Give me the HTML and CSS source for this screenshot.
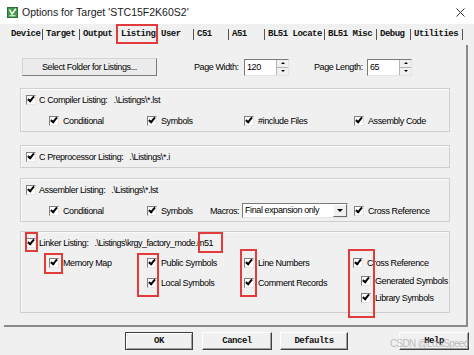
FILE: index.html
```html
<!DOCTYPE html>
<html lang="en">
<head>
    <meta charset="UTF-8">
    <meta name="viewport" content="width=device-width, initial-scale=1.0">
    <title>Options for Target</title>
    <link rel="stylesheet" href="styles.css">
</head>
<body>
<div class="window">
    <div class="titlebar">
        <svg class="app-icon" width="11" height="11" viewBox="0 0 11 11">
            <rect x="0.5" y="0.5" width="10" height="10" fill="#3f9d48" stroke="#2b6f32"/>
            <path d="M2.5 2.5 L5 7 L8.8 1.8" fill="none" stroke="#fff" stroke-width="1.5"/>
            <path d="M2.5 8.8 H8.5" stroke="#fff" stroke-width="1"/>
        </svg>
        <span class="title">Options for Target 'STC15F2K60S2'</span>
        <svg class="close" width="9" height="9" viewBox="0 0 9 9">
            <path d="M0.5 0.5 L8.5 8.5 M8.5 0.5 L0.5 8.5" stroke="#333" stroke-width="1"/>
        </svg>
    </div>

    <div class="tabs">
        <span class="tab">Device</span>
        <span class="tab">Target</span>
        <span class="tab plain">Output</span>
        <span class="tab plain active">Listing</span>
        <span class="tab">User</span>
        <span class="tab">C51</span>
        <span class="tab">A51</span>
        <span class="tab">BL51 Locate</span>
        <span class="tab">BL51 Misc</span>
        <span class="tab">Debug</span>
        <span class="tab">Utilities</span>
    </div>

    <div class="panel">
        <div class="toprow">
            <button class="folder">Select Folder for Listings...</button>
            <span class="lbl width-lbl">Page Width:</span>
            <span class="spin"><span class="val">120</span><span class="arrows"><i class="up"></i><i class="dn"></i></span></span>
            <span class="lbl length-lbl">Page Length:</span>
            <span class="spin"><span class="val">65</span><span class="arrows"><i class="up"></i><i class="dn"></i></span></span>
        </div>

        <div class="group g1">
            <div class="row head"><span class="cb"></span><span>C Compiler Listing:</span><span class="path">.\Listings\*.lst</span></div>
            <div class="items">
                <span class="item"><span class="cb"></span>Conditional</span>
                <span class="item"><span class="cb"></span>Symbols</span>
                <span class="item"><span class="cb"></span>#include Files</span>
                <span class="item"><span class="cb"></span>Assembly Code</span>
            </div>
        </div>

        <div class="group g2">
            <div class="row head"><span class="cb"></span><span>C Preprocessor Listing:</span><span class="path">.\Listings\*.i</span></div>
        </div>

        <div class="group g3">
            <div class="row head"><span class="cb"></span><span>Assembler Listing:</span><span class="path">.\Listings\*.lst</span></div>
            <div class="items asm">
                <span class="item"><span class="cb"></span>Conditional</span>
                <span class="item"><span class="cb"></span>Symbols</span>
                <span class="item">Macros:</span>
                <span class="select"><span class="val">Final expansion only</span><span class="drop"></span></span>
                <span class="item xref"><span class="cb"></span>Cross Reference</span>
            </div>
        </div>

        <div class="group g4">
            <div class="row head"><span class="cb"></span><span>Linker Listing:</span><span class="path lk-path">.\Listings\krgy_factory_mode.m51</span></div>
            <div class="cols">
                <div class="col">
                    <div class="line"><span class="cb"></span>Memory Map</div>
                </div>
                <div class="col">
                    <div class="line"><span class="cb"></span>Public Symbols</div>
                    <div class="line"><span class="cb"></span>Local Symbols</div>
                </div>
                <div class="col">
                    <div class="line"><span class="cb"></span>Line Numbers</div>
                    <div class="line"><span class="cb"></span>Comment Records</div>
                </div>
                <div class="col col4">
                    <div class="line"><span class="cb"></span>Cross Reference</div>
                    <div class="line sub"><span class="cb"></span>Generated Symbols</div>
                    <div class="line sub"><span class="cb"></span>Library Symbols</div>
                </div>
            </div>
        </div>
    </div>

    <div class="buttons">
        <button class="dlg ok">OK</button>
        <button class="dlg cancel">Cancel</button>
        <button class="dlg defaults">Defaults</button>
        <button class="dlg help">Help</button>
    </div>

    <!-- red annotation boxes -->
    <div class="mark m-tab"></div>
    <div class="mark m-linker"></div>
    <div class="mark m-m51"></div>
    <div class="mark m-mem"></div>
    <div class="mark m-pub"></div>
    <div class="mark m-line"></div>
    <div class="mark m-xref"></div>

    <div class="watermark">CSDN @LostSpeed</div>
</div>
</body>
</html>
```

FILE: styles.css
```css
body {
    margin: 0;
    background-color: #f0f0f0;
    font-family: "Liberation Sans", Arial, sans-serif;
    font-size: 9px;
    letter-spacing: -0.4px;
    color: #000;
}
.window {
    position: relative;
    width: 474px;
    height: 355px;
    overflow: hidden;
}
.titlebar {
    height: 24px;
    background-color: #fff;
    display: flex;
    align-items: center;
}
.app-icon {
    margin-left: 7px;
    margin-right: 4px;
}
.title {
    font-size: 10.5px;
    letter-spacing: 0;
    color: #1a1a1a;
}
.close {
    margin-left: auto;
    margin-right: 9px;
}

/* tab strip */
.tabs {
    height: 21px;
    display: flex;
    align-items: center;
    padding-left: 8px;
    font-family: "Liberation Mono", monospace;
    font-weight: bold;
    font-size: 9px;
    letter-spacing: -0.5px;
    color: #111;
}
.tab {
    box-sizing: border-box;
    height: 11px;
    line-height: 11px;
    padding-left: 3px;
    border-right: 1px solid #555;
    white-space: nowrap;
}
.tab.plain {
    border-right: none;
}
.tab.active {
    padding-left: 5px;
}
.tab:nth-child(1) { width: 35px; }
.tab:nth-child(2) { width: 37px; }
.tab:nth-child(3) { width: 36px; }
.tab:nth-child(4) { width: 42px; }
.tab:nth-child(5) { width: 36px; }
.tab:nth-child(6) { width: 35px; }
.tab:nth-child(7) { width: 36px; }
.tab:nth-child(8) { width: 60px; }
.tab:nth-child(9) { width: 52px; }
.tab:nth-child(10) { width: 34px; }
.tab:nth-child(11) { width: 52px; }

/* tab page */
.panel {
    box-sizing: border-box;
    margin-left: 4px;
    width: 464px;
    height: 282px;
    padding: 13px 16px 0;
    border-right: 2px solid #8a8a8a;
    border-bottom: 2px solid #8a8a8a;
}
.toprow {
    display: flex;
    align-items: center;
    height: 18px;
}
.folder {
    font: inherit;
    letter-spacing: -0.4px;
    margin-left: 2px;
    width: 135px;
    height: 18px;
    padding: 0;
    background-color: #ececec;
    border: 1px solid;
    border-color: #d4d4d4 #7c7c7c #7c7c7c #d4d4d4;
}
.lbl {
    margin-right: 3px;
}
.width-lbl {
    margin-left: 37px;
    width: 47px;
}
.length-lbl {
    margin-left: 25px;
    width: 50px;
}
.spin {
    box-sizing: border-box;
    display: flex;
    width: 45px;
    height: 17px;
    background-color: #fff;
    border: 1px solid;
    border-color: #7a7a7a #e3e3e3 #e3e3e3 #7a7a7a;
}
.spin .val {
    flex: 1;
    padding-left: 2px;
    line-height: 15px;
}
.arrows {
    width: 11px;
    display: flex;
    flex-direction: column;
    border-left: 1px solid #b5b5b5;
    background-color: #f0f0f0;
}
.arrows i {
    flex: 1;
    display: flex;
    align-items: center;
    justify-content: center;
}
.arrows .up {
    border-bottom: 1px solid #b5b5b5;
}
.arrows .up::after {
    content: "";
    border-left: 2px solid transparent;
    border-right: 2px solid transparent;
    border-bottom: 2px solid #000;
}
.arrows .dn::after {
    content: "";
    border-left: 2px solid transparent;
    border-right: 2px solid transparent;
    border-top: 2px solid #000;
}

/* group boxes */
.group {
    border: 1px solid #d0d0d0;
    box-shadow: inset 1px 1px 0 #fbfbfb;
}
.g1 { margin-top: 12px; }
.g2 { margin-top: 13px; }
.g3 { margin-top: 10px; }
.g4 { margin-top: 9px; padding-bottom: 6px; }
.row {
    height: 21px;
    display: flex;
    align-items: center;
}
.head {
    padding-left: 5px;
}
.head .cb {
    margin-right: 3px;
}
.path {
    margin-left: 6px;
}
.lk-path {
    letter-spacing: -0.5px;
}
.items {
    height: 21px;
    display: grid;
    grid-template-columns: 98px 97px 110px auto;
    align-items: center;
    padding-left: 28px;
}
.items.asm {
    grid-template-columns: 98px 63px 32px 106px auto;
}
.item, .line {
    display: flex;
    align-items: center;
    white-space: nowrap;
}
.item .cb, .line .cb {
    margin-right: 4px;
}
.xref {
    margin-left: 6px;
}
.select {
    box-sizing: border-box;
    display: flex;
    height: 15px;
    background-color: #fff;
    border: 1px solid;
    border-color: #7a7a7a #e3e3e3 #e3e3e3 #7a7a7a;
}
.select .val {
    flex: 1;
    padding-left: 2px;
    line-height: 13px;
}
.drop {
    box-sizing: border-box;
    width: 14px;
    background-color: #f0f0f0;
    border: 1px solid;
    border-color: #fff #6a6a6a #6a6a6a #fff;
    display: flex;
    align-items: center;
    justify-content: center;
}
.drop::after {
    content: "";
    border-left: 3px solid transparent;
    border-right: 3px solid transparent;
    border-top: 3px solid #000;
}
.cols {
    display: grid;
    grid-template-columns: 98px 97px 109px auto;
    padding-left: 28px;
}
.line {
    height: 20px;
}
.col4 .line {
    height: 19px;
}
.col4 .sub {
    height: 17px;
    padding-left: 8px;
}

/* checkbox */
.cb {
    position: relative;
    box-sizing: border-box;
    flex: none;
    width: 10px;
    height: 10px;
    background-color: #fff;
    border: 1px solid;
    border-color: #7f7f7f #e6e6e6 #e6e6e6 #7f7f7f;
}
.cb::after {
    content: "";
    position: absolute;
    left: 2px;
    top: -1px;
    width: 2px;
    height: 5px;
    border: solid #000;
    border-width: 0 2px 2px 0;
    transform: rotate(40deg);
}

/* dialog buttons */
.buttons {
    display: flex;
    margin-top: 5px;
    height: 18px;
}
.dlg {
    box-sizing: border-box;
    height: 18px;
    padding: 0;
    font-family: "Liberation Mono", monospace;
    font-weight: bold;
    font-size: 9px;
    letter-spacing: -0.5px;
    color: #111;
    background-color: #f0f0f0;
    border: 1px solid;
    border-color: #fff #404040 #404040 #fff;
    box-shadow: inset -1px -1px 0 #a0a0a0;
}
.ok {
    margin-left: 125px;
    width: 68px;
    border-color: #404040;
    box-shadow: inset 1px 1px 0 #fff, inset -1px -1px 0 #a0a0a0;
}
.cancel {
    margin-left: 9px;
    width: 70px;
}
.defaults {
    margin-left: 8px;
    width: 68px;
}
.help {
    margin-left: 51px;
    width: 70px;
}

/* annotations */
.mark {
    position: absolute;
    box-sizing: border-box;
    border: 2px solid #e23b3b;
}
.m-tab { left: 116px; top: 24px; width: 42px; height: 20px; }
.m-linker { left: 25px; top: 232px; width: 13px; height: 20px; }
.m-m51 { left: 198px; top: 232px; width: 25px; height: 21px; }
.m-mem { left: 44px; top: 253px; width: 19px; height: 21px; }
.m-pub { left: 137px; top: 253px; width: 22px; height: 44px; }
.m-line { left: 240px; top: 249px; width: 17px; height: 48px; }
.m-xref { left: 348px; top: 249px; width: 27px; height: 69px; }
.watermark {
    position: absolute;
    left: 390px;
    top: 338px;
    font-size: 10px;
    letter-spacing: -0.7px;
    color: rgba(150, 150, 150, 0.6);
}
```
